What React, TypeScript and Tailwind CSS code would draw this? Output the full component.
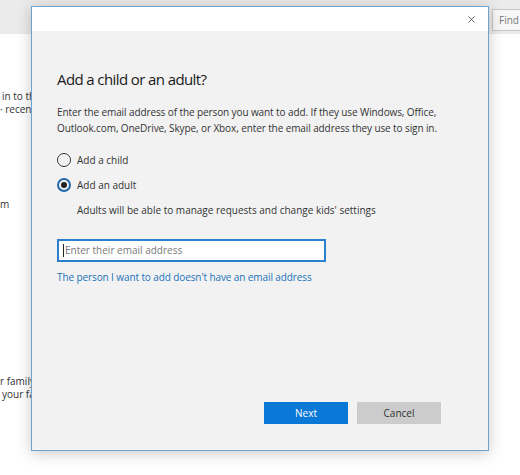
import { X } from 'lucide-react';

const font = { fontFamily: '"Open Sans", "Noto Sans", sans-serif' };

export default function App() {
  return (
    <div className="relative h-[475px] w-[520px] overflow-hidden bg-white text-[#333]" style={font}>
      <SettingsPage />
      <AddMemberDialog />
    </div>
  );
}

// The settings page behind the dialog, mostly covered by it.
function SettingsPage() {
  return (
    <div className="flex h-full flex-col">
      <div className="flex h-[34px] items-start justify-end bg-[#ebebeb] pt-[9px]">
        <div className="flex h-[22px] w-[28px] items-center overflow-hidden whitespace-nowrap border border-r-0 border-[#c8c8c8] bg-[#f7f7f7] pl-[6px] text-[10px] text-[#777]">
          Find a setting
        </div>
      </div>
      <div className="flex flex-col text-[10px] leading-[13px]">
        <p className="mt-[56px] whitespace-nowrap pl-[2px]">in to this device</p>
        <p className="whitespace-nowrap">· recent activity</p>
        <p className="mt-[82px] whitespace-nowrap">m</p>
        <p className="mt-[164px] whitespace-nowrap">r family</p>
        <p className="whitespace-nowrap pl-[2px]">your family</p>
      </div>
    </div>
  );
}

function AddMemberDialog() {
  return (
    <div className="absolute left-[31px] top-[6px] flex h-[445px] w-[458px] flex-col border border-[#6ea3cf] bg-[#f2f2f2] shadow-[0_2px_14px_rgba(0,0,0,0.22)]">
      <div className="flex h-[24px] items-center justify-end bg-white pr-[11px]">
        <X className="h-[11px] w-[11px] text-[#333]" strokeWidth={1.6} />
      </div>
      <div className="flex flex-1 flex-col whitespace-nowrap pl-[25px] pr-[47px] pb-[26px]">
        <h1 className="mt-[36px] text-[15px] font-normal leading-[24px] tracking-[-0.6px] text-[#1a1a1a]">
          Add a child or an adult?
        </h1>
        <div className="mt-[13px] flex flex-col text-[10px] leading-[16px] tracking-[-0.1px] text-[#333]">
          <span>Enter the email address of the person you want to add. If they use Windows, Office,</span>
          <span>Outlook.com, OneDrive, Skype, or Xbox, enter the email address they use to sign in.</span>
        </div>
        <div className="mt-[16px] flex flex-col gap-[9px]">
          <Radio label="Add a child" />
          <Radio label="Add an adult" checked />
        </div>
        <p className="mt-[9px] pl-[20px] text-[10px] leading-[16px]">
          Adults will be able to manage requests and change kids&apos; settings
        </p>
        <div className="mt-[21px] flex h-[23px] w-[269px] items-center border-2 border-[#2b7fcf] bg-white pl-[4px] text-[10px] text-[#7a7a7a]">
          <span className="mr-[1px] h-[13px] w-px bg-[#222]" />
          Enter their email address
        </div>
        <a className="mt-[7px] text-[10px] leading-[16px] tracking-[-0.1px] text-[#2272b9]">
          The person I want to add doesn&apos;t have an email address
        </a>
        <div className="mt-auto flex justify-end gap-[9px] text-[10px]">
          <button className="flex h-[22px] w-[84px] items-center justify-center bg-[#0a78d6] text-white">
            Next
          </button>
          <button className="flex h-[22px] w-[84px] items-center justify-center bg-[#cccccc] text-[#333]">
            Cancel
          </button>
        </div>
      </div>
    </div>
  );
}

function Radio({ label, checked = false }: { label: string; checked?: boolean }) {
  return (
    <div className="flex h-[16px] items-center gap-[6px] text-[10px]">
      <span
        className={
          checked
            ? 'flex h-[14px] w-[14px] items-center justify-center rounded-full border-2 border-[#2569a8]'
            : 'flex h-[14px] w-[14px] items-center justify-center rounded-full border-[1.5px] border-[#333]'
        }
      >
        {checked && <span className="h-[6px] w-[6px] rounded-full bg-[#222]" />}
      </span>
      {label}
    </div>
  );
}
